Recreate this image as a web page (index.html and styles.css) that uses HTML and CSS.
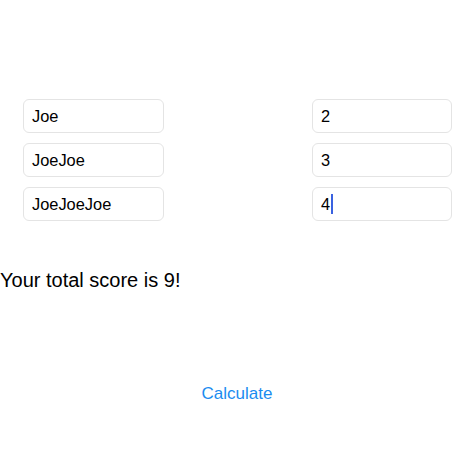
FILE: index.html
```html
<!DOCTYPE html>
<html>
<head>
<meta charset="utf-8">
<link rel="stylesheet" href="styles.css">
</head>
<body>
<div class="app">
  <div class="rows">
    <div class="row">
      <div class="field name">Joe</div>
      <div class="field score">2</div>
    </div>
    <div class="row">
      <div class="field name">JoeJoe</div>
      <div class="field score">3</div>
    </div>
    <div class="row">
      <div class="field name">JoeJoeJoe</div>
      <div class="field score">4<span class="caret"></span></div>
    </div>
  </div>
  <div class="total">Your total score is 9!</div>
  <div class="actions"><span class="calc">Calculate</span></div>
</div>
</body>
</html>
```
FILE: styles.css
```css
html, body {
  margin: 0;
  padding: 0;
  background: #ffffff;
}
body {
  font-family: "Liberation Sans", Arial, sans-serif;
  color: #000;
  width: 474px;
  height: 454px;
  overflow: hidden;
}
.app {
  padding-top: 99px;
}
.rows {
  display: flex;
  flex-direction: column;
  gap: 10px;
}
.row {
  display: flex;
  justify-content: space-between;
  padding-left: 23px;
  padding-right: 22px;
}
.field {
  box-sizing: border-box;
  height: 34px;
  border: 1px solid #e4e4e4;
  border-radius: 6px;
  font-size: 16.4px;
  line-height: 32px;
  padding-left: 8px;
  display: flex;
  align-items: center;
}
.name {
  width: 141px;
}
.score {
  width: 140px;
}
.caret {
  display: inline-block;
  width: 2px;
  height: 20px;
  background: #3a62e0;
  margin-left: 1px;
}
.total {
  margin-top: 47px;
  font-size: 20px;
  line-height: 24px;
}
.actions {
  margin-top: 92px;
  text-align: center;
}
.calc {
  color: #1a8cf0;
  font-size: 17px;
}
```
